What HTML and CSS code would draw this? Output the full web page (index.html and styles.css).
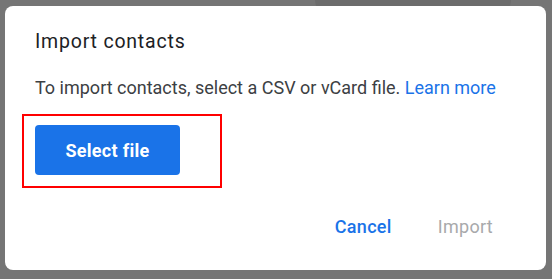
FILE: index.html
```html
<!DOCTYPE html>
<html lang="en">
<head>
<meta charset="utf-8">
<title>Import contacts</title>
<link rel="stylesheet" href="styles.css">
</head>
<body>
<div class="backdrop-shape"></div>
<div class="dialog" role="dialog" aria-labelledby="dlg-title">
  <h1 class="title" id="dlg-title">Import contacts</h1>
  <p class="message">To import contacts, select a CSV or vCard file. <a class="link" href="#">Learn more</a></p>
  <div class="highlight">
    <button class="primary-btn" type="button">Select file</button>
  </div>
  <div class="actions">
    <button class="text-btn" type="button">Cancel</button>
    <button class="text-btn disabled" type="button" disabled>Import</button>
  </div>
</div>
</body>
</html>
```

FILE: styles.css
```css
html, body {
  margin: 0;
  padding: 0;
}
body {
  width: 552px;
  height: 279px;
  overflow: hidden;
  background: #757575;
  font-family: Roboto, "Liberation Sans", Arial, sans-serif;
  position: relative;
}
.backdrop-shape {
  position: absolute;
  left: 315px;
  top: -40px;
  width: 196px;
  height: 80px;
  border-radius: 50%;
  background: #6c6c6c;
}
.dialog {
  position: relative;
  margin: 6px 0 0 5px;
  width: 541px;
  height: 264px;
  box-sizing: border-box;
  background: #fff;
  border-radius: 8px;
  padding: 24px 30px 0 30px;
  display: flex;
  flex-direction: column;
}
.title {
  margin: 0;
  font-size: 19.5px;
  line-height: 24px;
  font-weight: 400;
  color: #202124;
  letter-spacing: 0.8px;
}
.message {
  margin: 22px 0 0 0;
  font-size: 18px;
  line-height: 24px;
  color: #3c4043;
}
.link {
  color: #1a73e8;
  text-decoration: none;
}
.highlight {
  align-self: flex-start;
  margin: 14px 0 0 -13px;
  border: 2px solid #ff0000;
  padding: 9px 40px 11px 11px;
  display: flex;
}
.primary-btn {
  width: 145px;
  height: 50px;
  border: none;
  border-radius: 4px;
  background: #1a73e8;
  color: #fff;
  font-family: inherit;
  font-size: 18px;
  font-weight: 700;
  letter-spacing: 0.3px;
  padding: 0;
}
.actions {
  margin-top: 27px;
  display: flex;
  justify-content: flex-end;
  gap: 46px;
  padding-right: 23px;
}
.text-btn {
  border: none;
  background: none;
  padding: 0;
  font-family: inherit;
  font-size: 18px;
  line-height: 24px;
  font-weight: 500;
  letter-spacing: 0.3px;
  color: #1a73e8;
}
.text-btn.disabled {
  color: #a8a9ab;
  font-weight: 400;
}
```
